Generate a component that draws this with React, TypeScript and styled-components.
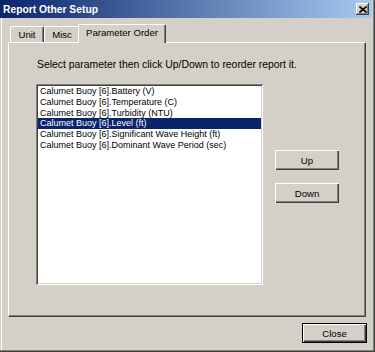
import React from "react";
import styled, { createGlobalStyle } from "styled-components";

const GlobalStyle = createGlobalStyle`
  html, body {
    margin: 0;
    padding: 0;
    background: #d4d0c8;
  }
  * {
    box-sizing: border-box;
  }
`;

const Window = styled.div`
  width: 375px;
  height: 352px;
  display: flex;
  flex-direction: column;
  padding: 0 3px 3px 0;
  background-color: #d4d0c8;
  box-shadow: inset -1px -1px #404040, inset -2px -2px #808080,
    inset 1px 0 #d4d0c8, inset 2px 0 #ffffff;
  font-family: "Liberation Sans", Arial, sans-serif;
  font-size: 9px;
  color: #000;
`;

const TitleBar = styled.div`
  height: 18px;
  display: flex;
  align-items: center;
  justify-content: space-between;
  padding: 0 3px 0 3px;
  background: linear-gradient(to right, #0a246a, #a6caf0);
`;

const Title = styled.div`
  color: #ffffff;
  font-weight: bold;
  font-size: 10.3px;
`;

const TitleButton = styled.div`
  width: 13px;
  height: 12px;
  display: flex;
  align-items: center;
  justify-content: center;
  background-color: #d4d0c8;
  box-shadow: inset -1px -1px #404040, inset 1px 1px #ffffff,
    inset -2px -2px #808080;
`;

const Body = styled.div`
  flex: 1;
  display: flex;
  flex-direction: column;
  padding: 6px 6px 0 8px;
`;

const TabStrip = styled.div`
  height: 18px;
  display: flex;
  align-items: flex-end;
  padding-left: 2px;
  position: relative;
  z-index: 1;
`;

const Tab = styled.div<{ $active?: boolean; $width: number }>`
  height: ${(p) => (p.$active ? "19px" : "16px")};
  margin-bottom: ${(p) => (p.$active ? "-1px" : "0")};
  margin-left: ${(p) => (p.$active ? "-2px" : "0")};
  padding-top: 2px;
  display: flex;
  align-items: flex-start;
  justify-content: center;
  width: ${(p) => p.$width}px;
  background-color: #d4d0c8;
  border-top: 1px solid #ffffff;
  border-left: 1px solid #ffffff;
  border-right: 1px solid #404040;
  border-radius: 2px 2px 0 0;
  box-shadow: inset -1px 0 #808080;
  font-size: 9.6px;
  line-height: 12px;
  white-space: nowrap;
  position: relative;
  z-index: ${(p) => (p.$active ? 2 : 1)};
`;

const Panel = styled.div`
  height: 275px;
  display: flex;
  flex-direction: column;
  padding: 16px 0 0 27px;
  border-top: 1px solid #ffffff;
  border-left: 1px solid #ffffff;
  border-right: 1px solid #404040;
  border-bottom: 1px solid #404040;
  box-shadow: inset -1px -1px #808080;
`;

const Label = styled.div`
  font-size: 10.4px;
  line-height: 11px;
  padding-left: 1px;
  white-space: nowrap;
`;

const ContentRow = styled.div`
  display: flex;
  margin-top: 14px;
`;

const ListBox = styled.div`
  width: 227px;
  height: 201px;
  padding: 2px;
  background-color: #ffffff;
  box-shadow: inset 1px 1px #808080, inset -1px -1px #ffffff,
    inset 2px 2px #404040, inset -2px -2px #d4d0c8;
`;

const ListItem = styled.div<{ $selected?: boolean }>`
  height: 10.75px;
  line-height: 10.75px;
  padding-left: 2px;
  white-space: nowrap;
  background-color: ${(p) => (p.$selected ? "#0a246a" : "transparent")};
  color: ${(p) => (p.$selected ? "#ffffff" : "#000000")};
`;

const ButtonColumn = styled.div`
  display: flex;
  flex-direction: column;
  gap: 13px;
  margin: 66px 0 0 12px;
`;

const Button = styled.div<{ $default?: boolean }>`
  width: ${(p) => (p.$default ? 65 : 64)}px;
  height: 20px;
  display: flex;
  align-items: center;
  justify-content: center;
  font-size: 9.6px;
  background-color: #d4d0c8;
  box-shadow: ${(p) =>
    p.$default
      ? "inset 0 0 0 1px #000000, inset 2px 2px #ffffff, inset -2px -2px #404040, inset -3px -3px #808080"
      : "inset 1px 1px #ffffff, inset -1px -1px #404040, inset -2px -2px #808080"};
`;

const Footer = styled.div`
  display: flex;
  justify-content: flex-end;
  margin: 6px -1px 0 0;
`;

const items = [
  "Calumet Buoy [6].Battery (V)",
  "Calumet Buoy [6].Temperature (C)",
  "Calumet Buoy [6].Turbidity (NTU)",
  "Calumet Buoy [6].Level (ft)",
  "Calumet Buoy [6].Significant Wave Height (ft)",
  "Calumet Buoy [6].Dominant Wave Period (sec)",
];

export default function App() {
  return (
    <>
      <GlobalStyle />
      <Window>
        <TitleBar>
          <Title>Report Other Setup</Title>
          <TitleButton>
            <svg width="8" height="7" viewBox="0 0 8 7">
              <path d="M0.5 0.5 L7.5 6.5 M7.5 0.5 L0.5 6.5" stroke="#000" strokeWidth="1.6" />
            </svg>
          </TitleButton>
        </TitleBar>
        <Body>
          <TabStrip>
            <Tab $width={34}>Unit</Tab>
            <Tab $width={36}>Misc</Tab>
            <Tab $active $width={88}>Parameter Order</Tab>
          </TabStrip>
          <Panel>
            <Label>Select parameter then click Up/Down to reorder report it.</Label>
            <ContentRow>
              <ListBox>
                {items.map((item, i) => (
                  <ListItem key={item} $selected={i === 3}>
                    {item}
                  </ListItem>
                ))}
              </ListBox>
              <ButtonColumn>
                <Button>Up</Button>
                <Button>Down</Button>
              </ButtonColumn>
            </ContentRow>
          </Panel>
          <Footer>
            <Button $default>Close</Button>
          </Footer>
        </Body>
      </Window>
    </>
  );
}
